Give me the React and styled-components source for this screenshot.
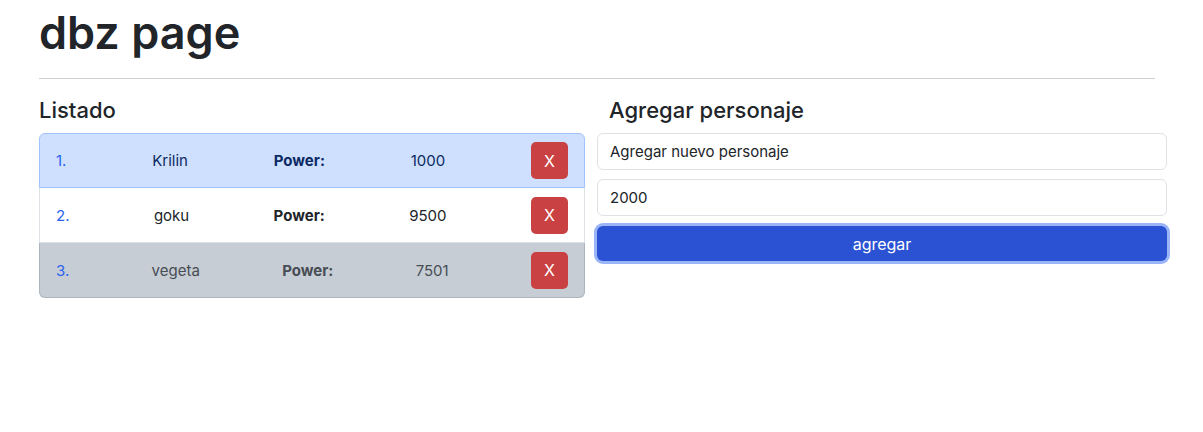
import React, { useState } from "react";
import styled, { createGlobalStyle } from "styled-components";

const GlobalStyle = createGlobalStyle`
  body {
    margin: 0;
    background: #fff;
    color: #212529;
    font-family: Inter, "Noto Sans", sans-serif;
    font-size: 16px;
  }
  * { box-sizing: border-box; }
`;

const Page = styled.div`
  padding: 0 39px;
  width: 1203px;
`;

const Title = styled.h1`
  margin: 0;
  padding-top: 7px;
  font-size: 45px;
  font-weight: 600;
  line-height: 52px;
  letter-spacing: 0;
`;

const Rule = styled.hr`
  width: 1116px;
  margin: 19px 0 16px;
  border: 0;
  border-top: 1px solid #cfcfcf;
`;

const Row = styled.div`
  display: grid;
  grid-template-columns: 546px 570px;
  column-gap: 12px;
`;

const Column = styled.section`
  display: flex;
  flex-direction: column;
`;

const Heading = styled.h4`
  margin: 0 0 8px;
  padding-left: ${(p) => (p.$inset ? "12px" : "0")};
  font-size: 22px;
  font-weight: 500;
  line-height: 30px;
`;

const List = styled.ul`
  list-style: none;
  margin: 0;
  padding: 0;
`;

const tones = {
  primary: { bg: "#cfe0fe", color: "#0b2a63", border: "#9fc3fb" },
  plain: { bg: "#ffffff", color: "#212529", border: "#dee2e6" },
  dark: { bg: "#c7cdd4", color: "#474d55", border: "#adb5bd" },
};

const Item = styled.li`
  display: flex;
  align-items: center;
  justify-content: space-between;
  height: 55px;
  padding: 0 16px;
  background: ${(p) => tones[p.$tone].bg};
  color: ${(p) => tones[p.$tone].color};
  border: 1px solid ${(p) => tones[p.$tone].border};
  & + & { border-top: 0; height: 55px; }
  &:first-child { border-radius: 6px 6px 0 0; }
  &:last-child { border-radius: 0 0 6px 6px; }
`;

const Index = styled.span`
  color: #2d63f0;
  font-size: 15px;
`;

const Cell = styled.span`
  font-size: 15px;
  font-weight: ${(p) => (p.$bold ? 700 : 400)};
`;

const RemoveButton = styled.button`
  width: 37px;
  height: 37px;
  border: 0;
  border-radius: 5px;
  background: #c94142;
  color: #fff;
  font-family: inherit;
  font-size: 16px;
  cursor: pointer;
`;

const Form = styled.form`
  display: flex;
  flex-direction: column;
  gap: 9px;
`;

const Input = styled.input`
  height: 37px;
  padding: 0 12px;
  border: 1px solid #dee2e6;
  border-radius: 6px;
  font-family: inherit;
  font-size: 15px;
  color: #212529;
  outline: none;
`;

const Submit = styled.button`
  height: 35px;
  margin-top: 1px;
  border: 0;
  border-radius: 6px;
  background: #2a52d3;
  color: #fff;
  font-family: inherit;
  font-size: 16px;
  box-shadow: 0 0 0 3px #99b5f8;
  cursor: pointer;
`;

const initial = [
  { name: "Krilin", power: 1000, tone: "primary" },
  { name: "goku", power: 9500, tone: "plain" },
  { name: "vegeta", power: 7501, tone: "dark" },
];

export default function App() {
  const [characters, setCharacters] = useState(initial);
  const [name, setName] = useState("Agregar nuevo personaje");
  const [power, setPower] = useState("2000");

  const remove = (index) =>
    setCharacters((prev) => prev.filter((_, i) => i !== index));

  const add = (e) => {
    e.preventDefault();
    setCharacters((prev) => [...prev, { name, power: Number(power), tone: "plain" }]);
  };

  return (
    <>
      <GlobalStyle />
      <Page>
        <Title>dbz page</Title>
        <Rule />
        <Row>
          <Column>
            <Heading>Listado</Heading>
            <List>
              {characters.map((c, i) => (
                <Item key={c.name + i} $tone={c.tone}>
                  <Index>{i + 1}.</Index>
                  <Cell>{c.name}</Cell>
                  <Cell $bold>Power:</Cell>
                  <Cell>{c.power}</Cell>
                  <RemoveButton onClick={() => remove(i)}>X</RemoveButton>
                </Item>
              ))}
            </List>
          </Column>
          <Column>
            <Heading $inset>Agregar personaje</Heading>
            <Form onSubmit={add}>
              <Input value={name} onChange={(e) => setName(e.target.value)} />
              <Input value={power} onChange={(e) => setPower(e.target.value)} />
              <Submit type="submit">agregar</Submit>
            </Form>
          </Column>
        </Row>
      </Page>
    </>
  );
}
